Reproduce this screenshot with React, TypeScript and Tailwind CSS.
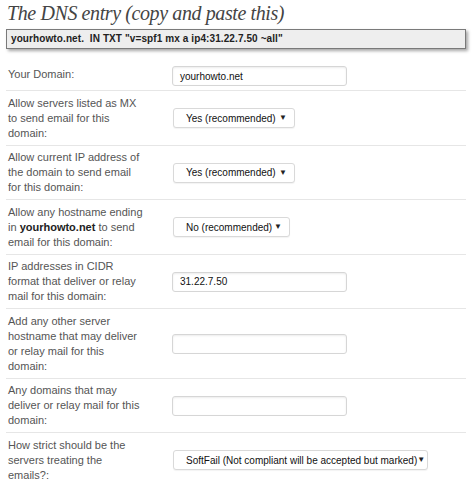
import { FC, ReactNode } from "react";

interface RowProps {
  label: ReactNode;
  children: ReactNode;
}

const Row: FC<RowProps> = (props) => {
  return (
    <div className="flex items-center border-t border-[#e6e6e6] pt-[4.5px] pb-[4px]">
      <div className="w-[165px] shrink-0 pl-[2px] pr-[26px] leading-[15px]">{props.label}</div>
      {props.children}
    </div>
  );
};

const TextBox: FC<{ value?: string }> = ({ value }) => {
  return (
    <div className="ml-[1px] flex h-[20px] w-[175px] items-center rounded-[3px] border border-[#d6d6d6] bg-white pl-[7px] text-[10px] text-[#111] shadow-[inset_0_1px_2px_rgba(0,0,0,0.08)]">
      {value}
    </div>
  );
};

const SelectBox: FC<{ value: string; width: string }> = ({ value, width }) => {
  return (
    <div className={`ml-[2px] flex h-[20px] ${width} items-center justify-between whitespace-nowrap rounded-[3px] border border-[#d9d9d9] bg-white pl-[12px] pr-[7px] text-[10px] text-[#111] shadow-[0_1px_1px_rgba(0,0,0,0.05)]`}>
      <span>{value}</span>
      <span className="text-[8px] leading-none text-[#222]">▼</span>
    </div>
  );
};

export default function App() {
  return (
    <div className="h-[488px] w-[474px] overflow-hidden bg-white px-[6px] font-['Liberation_Sans',Arial,sans-serif] text-[11px] text-[#555]">
      <h1 className="pl-[1px] font-['Liberation_Serif',serif] text-[20px] italic leading-[26px] tracking-[-0.4px] text-[#444]">
        The DNS entry (copy and paste this)
      </h1>
      <div className="mt-[3px] w-[460px] border border-[#7a7a7a] bg-[#eeeeee] py-[2px] pl-[4px] text-[10px] font-bold leading-[14px] tracking-[0.1px] text-[#222] shadow-[2px_2px_3px_rgba(0,0,0,0.35)]">
        yourhowto.net.&nbsp; IN TXT "v=spf1 mx a ip4:31.22.7.50 ~all"
      </div>
      <div className="mt-[12px] w-[460px]">
        <div className="flex items-start pt-[5px] pb-[4px]">
          <div className="w-[165px] shrink-0 pl-[2px] pt-[1px] leading-[15px]">Your Domain:</div>
          <TextBox value="yourhowto.net" />
        </div>
        <Row label="Allow servers listed as MX to send email for this domain:">
          <SelectBox value="Yes (recommended)" width="w-[122px]" />
        </Row>
        <Row label="Allow current IP address of the domain to send email for this domain:">
          <SelectBox value="Yes (recommended)" width="w-[122px]" />
        </Row>
        <Row
          label={
            <>
              Allow any hostname ending in <b className="text-[#222]">yourhowto.net</b> to send email for this domain:
            </>
          }
        >
          <SelectBox value="No (recommended)" width="w-[117px]" />
        </Row>
        <Row label="IP addresses in CIDR format that deliver or relay mail for this domain:">
          <TextBox value="31.22.7.50" />
        </Row>
        <Row label="Add any other server hostname that may deliver or relay mail for this domain:">
          <TextBox />
        </Row>
        <Row label="Any domains that may deliver or relay mail for this domain:">
          <TextBox />
        </Row>
        <Row label="How strict should be the servers treating the emails?:">
          <SelectBox value="SoftFail (Not compliant will be accepted but marked)" width="w-[255px]" />
        </Row>
      </div>
    </div>
  );
}
